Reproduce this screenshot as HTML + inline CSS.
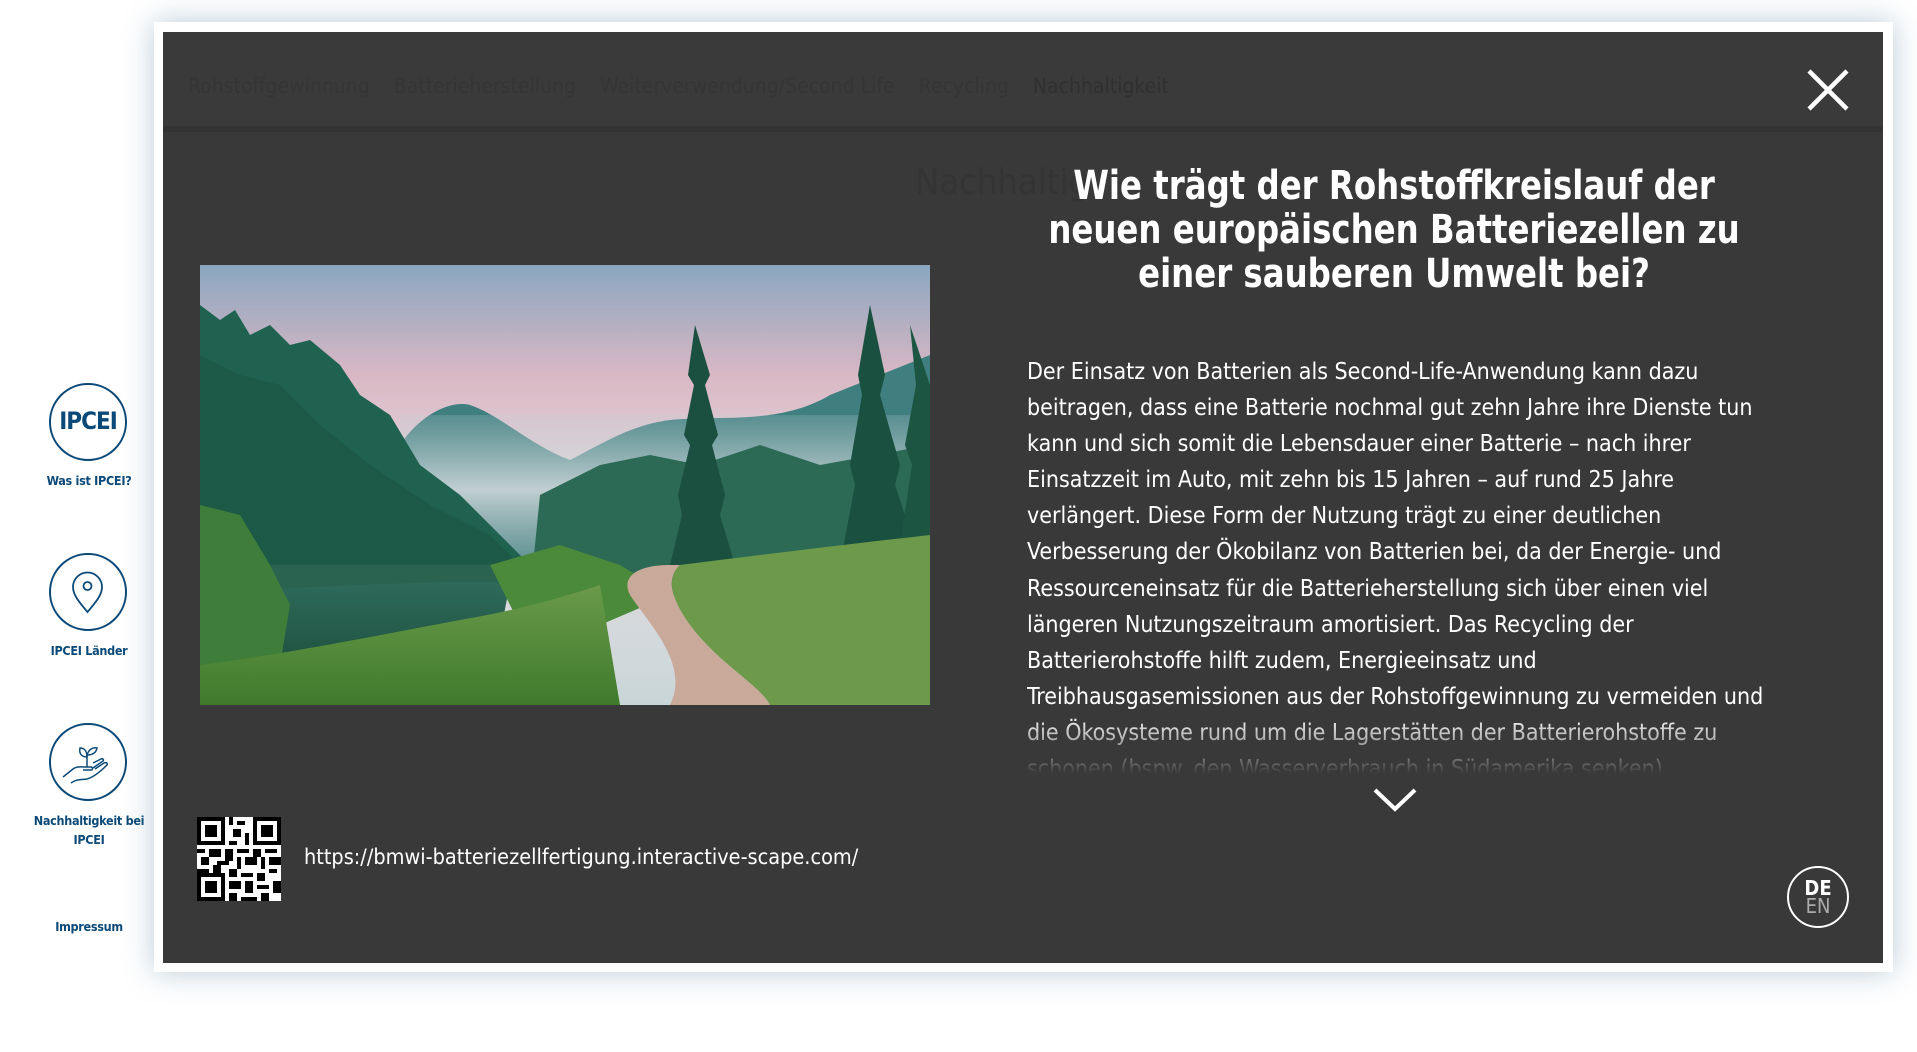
<!DOCTYPE html>
<html><head><meta charset="utf-8">
<style>
*{margin:0;padding:0;box-sizing:border-box}
body{width:1917px;height:1052px;background:#fff;position:relative;overflow:hidden;font-family:"DejaVu Sans Condensed","Liberation Sans",sans-serif}
.ic{position:absolute;left:49px;width:78px;height:78px;border:2.5px solid #0b4a78;border-radius:50%}
.lab{position:absolute;left:0;width:178px;text-align:center;color:#0b4a78;font-family:"DejaVu Sans Condensed",sans-serif;font-weight:bold;font-size:12.5px;line-height:19px;letter-spacing:-0.3px}
.frame{position:absolute;left:154px;top:22px;width:1739px;height:950px;background:#fff;box-shadow:0 0 28px rgba(100,140,170,.45)}
.dark{position:absolute;left:163px;top:32px;width:1720px;height:931px;background:#393939;overflow:hidden}
.topbar{position:absolute;left:0;top:0;width:100%;height:100px;background:#3a3a3a;border-bottom:6px solid #333}
.ghost{position:absolute;color:#353535;font-size:21px;white-space:nowrap}
.title{position:absolute;left:831px;top:0;width:800px;text-align:center;color:#fff;font-weight:bold;font-size:40px;line-height:44px;white-space:nowrap;transform:scaleX(0.9);transform-origin:50% 0}
.para{position:absolute;left:864px;top:322px;width:800px;height:420px;overflow:hidden;color:#fff;font-size:23px;line-height:36.1px;white-space:nowrap;-webkit-mask-image:linear-gradient(#000 0,#000 360px,rgba(0,0,0,.3) 405px,transparent 420px)}
.url{position:absolute;left:141px;top:813px;color:#fff;font-size:21.5px}
</style></head><body>
  <div class="ic" style="top:383px"><div style="text-align:center;line-height:73px;color:#0b4a78;font-weight:bold;font-size:24px;font-family:'DejaVu Sans Condensed',sans-serif;letter-spacing:-1px">IPCEI</div></div>
  <div class="lab" style="top:471px">Was ist IPCEI?</div>
  <div class="ic" style="top:553px"><svg width="73" height="73" viewBox="0 0 73 73"><path d="M36.5 57 C28 47 22 40 22 32 A14.5 14.5 0 0 1 51 32 C51 40 45 47 36.5 57Z" fill="none" stroke="#0b4a78" stroke-width="1.8"/><circle cx="36.5" cy="31" r="4" fill="none" stroke="#0b4a78" stroke-width="1.8"/></svg></div>
  <div class="lab" style="top:641px">IPCEI Länder</div>
  <div class="ic" style="top:723px"><svg width="73" height="73" viewBox="0 0 73 73"><g fill="none" stroke="#0b4a78" stroke-width="1.5"><path d="M12 52 L22 44 C26 41 30 42 34 42 L40 42 C42 42 42 45 40 45 L32 45"/><path d="M20 58 C25 54 30 55 36 54 C44 52 52 44 56 40 C57 38 55 37 53 38 L44 44"/><path d="M42 43 L52 36 C53 35 52 33 50 34 L42 38"/><path d="M36 42 L36 30"/><path d="M36 32 C30 32 28 28 29 23 C34 23 36 27 36 32Z"/><path d="M36 30 C38 24 42 22 46 23 C45 28 41 30 36 30Z"/></g></svg></div>
  <div class="lab" style="top:811px">Nachhaltigkeit bei<br>IPCEI</div>
  <div class="lab" style="top:917px">Impressum</div>
<div class="frame"></div>
<div class="dark">
  <div class="topbar">
    <div class="ghost" style="left:25px;top:42px">Rohstoffgewinnung &nbsp;&nbsp; Batterieherstellung &nbsp;&nbsp; Weiterverwendung/Second Life &nbsp;&nbsp; Recycling &nbsp;&nbsp; <span style="color:#303030">Nachhaltigkeit</span></div>
  </div>
  <div class="ghost" style="left:752px;top:130px;font-size:36px;color:#343434">Nachhaltig</div>
  <svg style="position:absolute;left:1643px;top:36px" width="44" height="44" viewBox="0 0 44 44"><path d="M3 3 L41 41 M41 3 L3 41" stroke="#fff" stroke-width="4.5"/></svg>
  <div class="title" style="top:132px">Wie trägt der Rohstoffkreislauf der<br>neuen europäischen Batteriezellen zu<br>einer sauberen Umwelt bei?</div>
  <svg style="position:absolute;left:37px;top:233px" width="730" height="440" viewBox="0 0 730 440" preserveAspectRatio="none">
    <defs>
      <linearGradient id="sky" x1="0" y1="0" x2="0" y2="1"><stop offset="0" stop-color="#8aa6c0"/><stop offset=".25" stop-color="#d9b8c4"/><stop offset=".55" stop-color="#e6dde2"/><stop offset="1" stop-color="#c9d6d8"/></linearGradient>
      <linearGradient id="lake" x1="0" y1="0" x2="0" y2="1"><stop offset="0" stop-color="#2e6a5a"/><stop offset="1" stop-color="#1f5240"/></linearGradient>
      <linearGradient id="grass" x1="0" y1="0" x2="0" y2="1"><stop offset="0" stop-color="#6a9a4a"/><stop offset="1" stop-color="#3f7a2c"/></linearGradient>
      <linearGradient id="mist" x1="0" y1="0" x2="0" y2="1"><stop offset="0" stop-color="#bfccd0" stop-opacity=".2"/><stop offset=".5" stop-color="#d8dde0" stop-opacity=".85"/><stop offset="1" stop-color="#a7bcbd" stop-opacity=".3"/></linearGradient>
    </defs>
    <rect width="730" height="440" fill="url(#sky)"/>
    <path d="M200 180 C220 150 250 135 270 140 C300 150 330 180 370 195 C400 180 430 160 470 155 C520 150 580 160 630 130 L730 90 L730 300 L200 300Z" fill="#3f7f80"/>
    <rect x="200" y="150" width="530" height="150" fill="url(#mist)"/>
    <path d="M0 40 L20 55 L35 45 L50 70 L70 60 L90 80 L110 75 L140 100 L160 130 L190 150 L220 200 L260 230 L290 260 L310 280 L330 300 L0 300Z" fill="#1f6250"/>
    <path d="M0 90 L40 110 L80 120 L120 160 L170 200 L230 240 L290 270 L320 300 L0 300Z" fill="#1c5a47"/>
    <path d="M340 230 L400 200 L450 190 L500 200 L560 180 L620 200 L730 180 L730 330 L330 330Z" fill="#2c6a55"/>
    <path d="M495 60 L510 110 L505 120 L518 170 L512 180 L525 230 L520 250 L535 300 L470 300 L482 250 L478 230 L490 180 L484 170 L494 120 L488 110Z" fill="#1b4f3f"/>
    <path d="M670 40 L685 110 L680 130 L700 200 L695 220 L715 280 L640 300 L655 220 L650 200 L662 130 L658 110Z" fill="#1a5040"/>
    <path d="M710 60 L730 120 L730 290 L700 280 L712 200 L705 180 L716 120Z" fill="#1c5542"/>
    <path d="M0 300 L330 300 L330 330 L0 330Z" fill="#2a6350"/>
    <path d="M0 330 L60 325 C150 320 260 315 310 318 L300 370 L60 400 L0 400Z" fill="url(#lake)"/>
    <path d="M0 240 L40 250 L70 300 L90 340 L80 400 L0 420Z" fill="#3e7d3a"/>
    <path d="M290 300 L360 280 L420 300 L470 330 L400 360 L320 360Z" fill="#4a8a3a"/>
    <path d="M0 440 L0 400 C80 390 180 370 260 355 C320 345 370 330 400 320 L420 440Z" fill="url(#grass)"/>
    <path d="M470 440 C490 400 450 360 430 330 C420 310 440 300 470 300 L480 300 C470 310 465 325 490 360 C520 400 560 420 570 440Z" fill="#c8a99a"/>
    <path d="M570 440 C560 420 520 400 490 360 C465 325 470 310 480 300 C560 290 640 280 730 270 L730 440Z" fill="#6c9a4a"/>
  </svg>
  <div class="para">Der Einsatz von Batterien als Second-Life-Anwendung kann dazu<br>beitragen, dass eine Batterie nochmal gut zehn Jahre ihre Dienste tun<br>kann und sich somit die Lebensdauer einer Batterie – nach ihrer<br>Einsatzzeit im Auto, mit zehn bis 15 Jahren – auf rund 25 Jahre<br>verlängert. Diese Form der Nutzung trägt zu einer deutlichen<br>Verbesserung der Ökobilanz von Batterien bei, da der Energie- und<br>Ressourceneinsatz für die Batterieherstellung sich über einen viel<br>längeren Nutzungszeitraum amortisiert. Das Recycling der<br>Batterierohstoffe hilft zudem, Energieeinsatz und<br>Treibhausgasemissionen aus der Rohstoffgewinnung zu vermeiden und<br>die Ökosysteme rund um die Lagerstätten der Batterierohstoffe zu<br>schonen (bspw. den Wasserverbrauch in Südamerika senken).</div>
  <svg style="position:absolute;left:1209px;top:755px" width="46" height="26" viewBox="0 0 46 26"><path d="M3 3 L23 22 L43 3" fill="none" stroke="#fff" stroke-width="4"/></svg>
  <svg style="position:absolute;left:34px;top:785px" width="84" height="84" viewBox="0 0 21 21" shape-rendering="crispEdges">
    <rect width="21" height="21" fill="#fff"/>
    <g fill="#000"><path d="M0 0h7v7h-7zM14 0h7v7h-7zM0 14h7v7h-7z"/></g>
    <g fill="#fff"><path d="M1 1h5v5h-5zM15 1h5v5h-5zM1 15h5v5h-5z"/></g>
    <g fill="#000"><path d="M2 2h3v3h-3zM16 2h3v3h-3zM2 16h3v3h-3z"/>
    <path d="M8 0h1v2h-1zM10 1h2v1h-2zM9 3h2v2h-2zM12 4h1v3h-1zM8 6h2v1h-2zM0 8h2v1h-2zM3 8h3v2h-3zM7 8h2v3h-2zM10 8h3v1h-3zM14 8h2v2h-2zM17 8h3v1h-3zM1 10h2v2h-2zM5 11h3v1h-3zM10 10h1v3h-1zM12 10h3v2h-3zM16 10h1v3h-1zM18 10h3v2h-3zM0 13h3v1h-3zM4 12h2v2h-2zM8 13h2v2h-2zM11 14h3v1h-3zM15 14h2v2h-2zM18 13h2v1h-2zM8 16h3v2h-3zM12 16h2v3h-2zM15 17h3v1h-3zM19 16h2v3h-2zM8 19h2v2h-2zM11 20h4v1h-4zM16 19h2v2h-2z"/></g>
  </svg>
  <div class="url">https://bmwi-batteriezellfertigung.interactive-scape.com/</div>
  <div style="position:absolute;left:1624px;top:834px;width:62px;height:62px;border:2.5px solid #fff;border-radius:50%;text-align:center;font-weight:bold;font-size:20px;line-height:18px;padding-top:11px"><span style="color:#fff">DE</span><br><span style="color:#aaa;font-weight:normal">EN</span></div>
</div>
</body></html>
